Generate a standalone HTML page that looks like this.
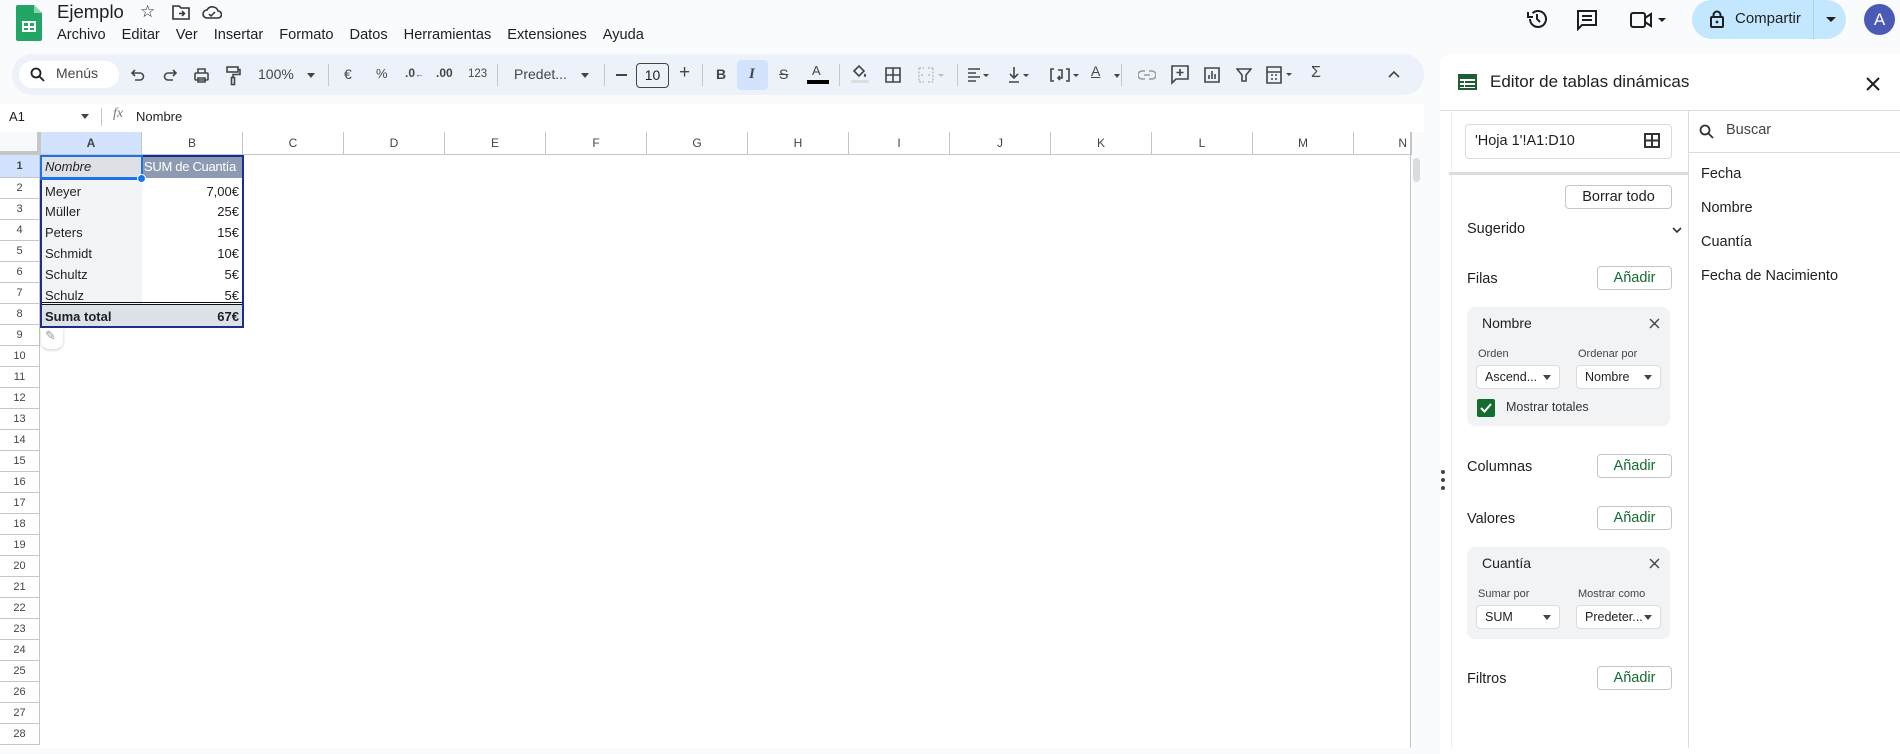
<!DOCTYPE html>
<html><head><meta charset="utf-8"><style>
*{margin:0;padding:0;box-sizing:border-box}
body{width:1900px;height:748px;overflow:hidden;background:#f9fbfd;font-family:"Liberation Sans",sans-serif;color:#1f1f1f;position:relative}
.a{position:absolute;white-space:nowrap}
.menu span{margin-right:16px}
.tb{position:absolute;top:66px;font-size:14px;color:#444746}
.ic{position:absolute}
.sep{position:absolute;top:64px;width:1px;height:22px;background:#c7c7c7}
.ch{position:absolute;top:132px;height:23px;font-size:12px;color:#444;text-align:center;line-height:23px;border-right:1px solid #c4c7c5;width:101px;background:#fff}
.rh{position:absolute;left:0;width:40px;font-size:11px;color:#444;text-align:center;border-bottom:1px solid #c4c7c5;height:21px;line-height:21px;background:#fff;border-right:1px solid #c4c7c5}
.cell{position:absolute;font-size:13px;height:21px;line-height:21px;padding:0 4px;width:101px;overflow:hidden;white-space:nowrap}
.btn{position:absolute;border:1px solid #c4c7c5;border-radius:4px;background:#fff;color:#146c2e;font-size:14.5px;text-align:center;font-weight:500}
.lbl{position:absolute;font-size:14.5px;color:#1f1f1f}
.sel{position:absolute;height:24px;background:#fff;border:1px solid #dadce0;border-radius:4px;font-size:12.5px;line-height:22px;padding-left:8px;color:#1f1f1f}
.sel:after{content:"";position:absolute;right:8px;top:9px;border:4px solid transparent;border-top:5px solid #444;}
.card{position:absolute;left:1467px;width:203px;background:#f1f3f4;border-radius:8px}
.small{position:absolute;font-size:11px;color:#444}
</style></head><body>

<svg class="ic" style="left:16px;top:5px" width="26" height="36" viewBox="0 0 26 36"><path d="M2 0h16l8 8v26a2 2 0 0 1-2 2H2a2 2 0 0 1-2-2V2a2 2 0 0 1 2-2z" fill="#23a566"/><path d="M18 0v8h8z" fill="#8ed1b1"/><rect x="6" y="16" width="14" height="11" fill="#fff"/><path d="M8 18h4v3H8zM14 18h4v3h-4zM8 23h4v2H8zM14 23h4v2h-4z" fill="#23a566"/></svg>
<div class="a" style="left:57px;top:1px;font-size:18.5px">Ejemplo</div>
<div class="a" style="left:140px;top:2px;font-size:17px">☆</div>
<svg class="ic" style="left:172px;top:5px" width="18" height="15" viewBox="0 0 18 15"><path d="M1 1h6l2 2h8v11H1z" fill="none" stroke="#333" stroke-width="1.6"/><path d="M7 8.5h5M10 6l2.5 2.5L10 11" fill="none" stroke="#333" stroke-width="1.5"/></svg>
<svg class="ic" style="left:202px;top:4px" width="20" height="16" viewBox="0 0 20 16"><path d="M5 14a4 4 0 0 1 0-8 6 6 0 0 1 11 1 3.5 3.5 0 0 1 0 7z" fill="none" stroke="#333" stroke-width="1.6"/><path d="M7 10l2 2 4-4" fill="none" stroke="#333" stroke-width="1.5"/></svg>
<div class="a menu" style="left:57px;top:27px;font-size:14.6px"><span>Archivo</span><span>Editar</span><span>Ver</span><span>Insertar</span><span>Formato</span><span>Datos</span><span>Herramientas</span><span>Extensiones</span><span>Ayuda</span></div>

<svg class="ic" style="left:1526px;top:8px" width="22" height="22" viewBox="0 0 22 22"><path d="M4 11a8 8 0 1 0 2.5-5.8" fill="none" stroke="#1f1f1f" stroke-width="2"/><path d="M2 4v5h5" fill="none" stroke="#1f1f1f" stroke-width="2"/><path d="M11 6v5l3 3" fill="none" stroke="#1f1f1f" stroke-width="2"/></svg>
<svg class="ic" style="left:1576px;top:9px" width="22" height="22" viewBox="0 0 22 22"><path d="M2 2h18v14H6l-4 4z" fill="none" stroke="#1f1f1f" stroke-width="2"/><path d="M6 7h10M6 11h10" stroke="#1f1f1f" stroke-width="2"/></svg>
<svg class="ic" style="left:1630px;top:11px" width="40" height="18" viewBox="0 0 40 18"><rect x="1" y="2" width="14" height="14" rx="2" fill="none" stroke="#1f1f1f" stroke-width="2"/><path d="M15 7l6-4v12l-6-4" fill="none" stroke="#1f1f1f" stroke-width="2"/><path d="M28 7h8l-4 4z" fill="#1f1f1f"/></svg>
<div class="a" style="left:1692px;top:0;width:154px;height:39px;background:#c2e7ff;border-radius:20px"></div>
<div class="a" style="left:1813px;top:0;width:1px;height:39px;background:#a8d4f0"></div>
<svg class="ic" style="left:1710px;top:10px" width="14" height="18" viewBox="0 0 14 18"><rect x="1" y="7" width="12" height="10" rx="1" fill="none" stroke="#1f1f1f" stroke-width="2"/><path d="M3.5 7V5a3.5 3.5 0 0 1 7 0v2" fill="none" stroke="#1f1f1f" stroke-width="2"/><circle cx="7" cy="12" r="1.4" fill="#1f1f1f"/></svg>
<div class="a" style="left:1735px;top:10px;font-size:15px;font-weight:500">Compartir</div>
<div class="a" style="left:1826px;top:17px;border:5px solid transparent;border-top:5px solid #1f1f1f"></div>
<div class="a" style="left:1864px;top:4px;width:31px;height:31px;border-radius:50%;background:#4b5bb5;color:#fff;font-size:17px;text-align:center;line-height:31px">A</div>

<div class="a" style="left:12px;top:54px;width:1412px;height:41px;background:#edf2fa;border-radius:20px"></div>
<div class="a" style="left:19px;top:61px;width:100px;height:27px;background:#fff;border-radius:14px"></div>
<svg class="ic" style="left:30px;top:67px" width="15" height="15" viewBox="0 0 15 15"><circle cx="6" cy="6" r="4.5" fill="none" stroke="#1f1f1f" stroke-width="1.8"/><path d="M9.5 9.5l4.5 4.5" stroke="#1f1f1f" stroke-width="1.8"/></svg>
<div class="tb" style="left:56px;top:65px">Menús</div>
<svg class="ic" style="left:130px;top:68px" width="96" height="16" viewBox="0 0 96 16"><g fill="none" stroke="#444746" stroke-width="1.6"><path d="M3 5h7a3.5 3.5 0 0 1 0 7H5M5 2L2 5l3 3"/><path d="M45 5h-7a3.5 3.5 0 0 0 0 7h5M43 2l3 3-3 3"/><rect x="65" y="5" width="13" height="7" rx="1"/><path d="M68 5V1h7v4M68 10h7v4h-7z"/></g></svg>
<svg class="ic" style="left:225px;top:66px" width="16" height="20" viewBox="0 0 16 20"><g fill="none" stroke="#444746" stroke-width="1.6"><rect x="2" y="1" width="11" height="5"/><path d="M13 3.5h2v5H8v3"/><rect x="6.5" y="11.5" width="3" height="7"/></g></svg>
<div class="tb" style="left:258px">100%</div>
<div class="a" style="left:307px;top:73px;border:4px solid transparent;border-top:5px solid #444"></div>
<div class="sep" style="left:328px"></div>
<div class="tb" style="left:344px">€</div>
<div class="tb" style="left:376px;font-size:13px">%</div>
<div class="tb" style="left:405px;font-size:12px;font-weight:bold">.0<span style="font-size:9px">←</span></div>
<div class="tb" style="left:436px;font-size:12px;font-weight:bold">.00</div>
<div class="tb" style="left:468px;font-size:11.5px;top:68px">123</div>
<div class="sep" style="left:497px"></div>
<div class="tb" style="left:514px">Predet...</div>
<div class="a" style="left:581px;top:73px;border:4px solid transparent;border-top:5px solid #444"></div>
<div class="sep" style="left:604px"></div>
<div class="a" style="left:616px;top:74px;width:11px;height:2px;background:#444"></div>
<div class="a" style="left:636px;top:63px;width:33px;height:25px;border:1px solid #444;border-radius:4px;font-size:14px;text-align:center;line-height:23px">10</div>
<div class="tb" style="left:679px;top:62px;font-size:19px">+</div>
<div class="sep" style="left:702px"></div>
<div class="tb" style="left:716px;font-weight:bold;font-size:14px">B</div>
<div class="a" style="left:737px;top:60px;width:31px;height:30px;background:#d3e3fd;border-radius:4px"></div>
<div class="tb" style="left:749px;font-style:italic;font-weight:bold;font-family:'Liberation Serif',serif;font-size:15px">I</div>
<div class="tb" style="left:779px;text-decoration:line-through">S</div>
<div class="tb" style="left:812px;font-size:13px;top:63px">A</div>
<div class="a" style="left:807px;top:80px;width:22px;height:4px;background:#000"></div>
<div class="sep" style="left:839px"></div>
<svg class="ic" style="left:850px;top:63px" width="20" height="20" viewBox="0 0 20 20"><path d="M4 8l5-5 5 5-5 5z" fill="none" stroke="#444" stroke-width="1.6"/><path d="M15 10c1 2 2 3 0 4-2-1-1-2 0-4z" fill="#444"/><rect x="1" y="17" width="18" height="3" fill="#ddd"/></svg>
<svg class="ic" style="left:885px;top:67px" width="16" height="16" viewBox="0 0 16 16"><path d="M1 1h14v14H1zM8 1v14M1 8h14" fill="none" stroke="#444" stroke-width="1.6"/></svg>
<svg class="ic" style="left:918px;top:67px" width="28" height="16" viewBox="0 0 28 16"><path d="M1 1h5M1 15h5M10 1h5M10 15h5M1 1v14M15 1v14M3 8h3M10 8h3" fill="none" stroke="#bbb" stroke-width="1.4" stroke-dasharray="2 1.5"/><path d="M20 7h6l-3 3z" fill="#bbb"/></svg>
<div class="sep" style="left:957px"></div>
<svg class="ic" style="left:966px;top:66px" width="130" height="18" viewBox="0 0 130 18"><g fill="none" stroke="#444" stroke-width="1.6"><path d="M2 3h12M2 7h8M2 11h12M2 15h8"/><path d="M48 1v11M44 8l4 4 4-4M43 16h10"/><path d="M88 3h-3v12h3M92 4h4v8h-4M94 10l-2 2 2 2M100 3h3v12h-3"/></g><path d="M17 8h6l-3 3z M57 8h6l-3 3z M107 8h6l-3 3z" fill="#444"/></svg>
<div class="tb" style="left:1091px;top:63px;text-decoration:underline;font-size:14px">A</div>
<div class="a" style="left:1114px;top:74px;border:3px solid transparent;border-top:4px solid #444"></div>
<div class="sep" style="left:1121px"></div>
<svg class="ic" style="left:1138px;top:69px" width="18" height="12" viewBox="0 0 18 12"><path d="M7 2H4a4 4 0 0 0 0 8h3M11 2h3a4 4 0 0 1 0 8h-3M6 6h6" fill="none" stroke="#999" stroke-width="1.5"/></svg>
<svg class="ic" style="left:1171px;top:65px" width="18" height="20" viewBox="0 0 18 20"><path d="M1 1h16v13H5l-4 4zM9 4v7M5.5 7.5h7" fill="none" stroke="#444" stroke-width="1.6"/></svg>
<svg class="ic" style="left:1204px;top:67px" width="16" height="16" viewBox="0 0 16 16"><path d="M1 1h14v14H1zM5 12V8M8 12V4M11 12V7" fill="none" stroke="#444" stroke-width="1.6"/></svg>
<svg class="ic" style="left:1236px;top:67px" width="16" height="16" viewBox="0 0 16 16"><path d="M1 2h14l-5 6v6H6V8z" fill="none" stroke="#444" stroke-width="1.6"/></svg>
<svg class="ic" style="left:1266px;top:66px" width="30" height="18" viewBox="0 0 30 18"><path d="M1 1h14v16H1zM1 6h14M5 9h2M9 9h2M5 13h2M9 13h2" fill="none" stroke="#444" stroke-width="1.6"/><path d="M20 7h6l-3 3z" fill="#444"/></svg>
<div class="tb" style="left:1311px;top:64px;font-size:16px">Σ</div>
<svg class="ic" style="left:1388px;top:70px" width="12" height="8" viewBox="0 0 12 8"><path d="M1 7l5-5 5 5" fill="none" stroke="#444" stroke-width="1.6"/></svg>

<div class="a" style="left:0;top:104px;width:1424px;height:28px;background:#fff"></div>
<div class="a" style="left:9px;top:109px;font-size:13px">A1</div>
<div class="a" style="left:81px;top:114px;border:4px solid transparent;border-top:5px solid #444"></div>
<div class="a" style="left:101px;top:108px;width:1px;height:18px;background:#c7c7c7"></div>
<div class="a" style="left:113px;top:106px;font-size:14px;font-style:italic;font-family:'Liberation Serif',serif;color:#777">fx</div>
<div class="a" style="left:136px;top:109px;font-size:13px">Nombre</div>

<div class="a" style="left:0;top:132px;width:1412px;height:616px;background:#fff"></div>
<div class="a" style="left:0;top:132px;width:41px;height:23px;background:#f8f9fa;border-right:4px solid #c4c7c5;border-bottom:4px solid #c4c7c5"></div>
<div class="ch" style="left:41px;background:#d3e3fd;font-weight:bold">A</div>
<div class="ch" style="left:142px">B</div><div class="ch" style="left:243px">C</div><div class="ch" style="left:344px">D</div><div class="ch" style="left:445px">E</div><div class="ch" style="left:546px">F</div><div class="ch" style="left:647px">G</div><div class="ch" style="left:748px">H</div><div class="ch" style="left:849px">I</div><div class="ch" style="left:950px">J</div><div class="ch" style="left:1051px">K</div><div class="ch" style="left:1152px">L</div><div class="ch" style="left:1253px">M</div><div class="ch" style="left:1354px;width:58px;text-align:right;padding-right:4px">N</div>
<div class="a" style="left:0;top:154px;width:1412px;height:1px;background:#c4c7c5"></div>
<div class="rh" style="top:155px;height:23px;line-height:23px;background:#d3e3fd;font-weight:bold">1</div>
<div class="rh" style="top:178px">2</div><div class="rh" style="top:199px">3</div><div class="rh" style="top:220px">4</div><div class="rh" style="top:241px">5</div><div class="rh" style="top:262px">6</div><div class="rh" style="top:283px">7</div><div class="rh" style="top:304px">8</div><div class="rh" style="top:325px">9</div><div class="rh" style="top:346px">10</div><div class="rh" style="top:367px">11</div><div class="rh" style="top:388px">12</div><div class="rh" style="top:409px">13</div><div class="rh" style="top:430px">14</div><div class="rh" style="top:451px">15</div><div class="rh" style="top:472px">16</div><div class="rh" style="top:493px">17</div><div class="rh" style="top:514px">18</div><div class="rh" style="top:535px">19</div><div class="rh" style="top:556px">20</div><div class="rh" style="top:577px">21</div><div class="rh" style="top:598px">22</div><div class="rh" style="top:619px">23</div><div class="rh" style="top:640px">24</div><div class="rh" style="top:661px">25</div><div class="rh" style="top:682px">26</div><div class="rh" style="top:703px">27</div><div class="rh" style="top:724px">28</div>

<div class="a" style="left:41px;top:155px;width:101px;height:23px;background:#dde1e6"></div>
<div class="a" style="left:142px;top:155px;width:101px;height:23px;background:#8d9ab2"></div>
<div class="a" style="left:41px;top:178px;width:101px;height:126px;background:#f3f4f6"></div>
<div class="a" style="left:41px;top:305px;width:202px;height:22px;background:#dde1e8"></div>
<div class="a" style="left:41px;top:302px;width:202px;height:3px;border-top:1px solid #111;border-bottom:1px solid #111"></div>
<div class="cell" style="left:41px;top:156px;font-style:italic">Nombre</div>
<div class="cell" style="left:142px;top:156px;color:#fff;padding:0 2px;letter-spacing:-0.3px">SUM de Cuantía</div>
<div class="cell" style="left:41px;top:181px">Meyer</div><div class="cell" style="left:142px;top:181px;text-align:right">7,00€</div>
<div class="cell" style="left:41px;top:201px">Müller</div><div class="cell" style="left:142px;top:201px;text-align:right">25€</div>
<div class="cell" style="left:41px;top:222px">Peters</div><div class="cell" style="left:142px;top:222px;text-align:right">15€</div>
<div class="cell" style="left:41px;top:243px">Schmidt</div><div class="cell" style="left:142px;top:243px;text-align:right">10€</div>
<div class="cell" style="left:41px;top:264px">Schultz</div><div class="cell" style="left:142px;top:264px;text-align:right">5€</div>
<div class="cell" style="left:41px;top:285px">Schulz</div><div class="cell" style="left:142px;top:285px;text-align:right">5€</div>
<div class="cell" style="left:41px;top:306px;font-weight:bold">Suma total</div><div class="cell" style="left:142px;top:306px;text-align:right;font-weight:bold">67€</div>
<div class="a" style="left:40px;top:155px;width:204px;height:173px;border:2px solid #1a2f8f"></div>
<div class="a" style="left:40px;top:155px;width:103px;height:25px;border:2px solid #1a73e8;border-bottom-width:3px"></div>
<div class="a" style="left:137px;top:174px;width:9px;height:9px;border-radius:50%;background:#1a73e8;border:1px solid #fff"></div>
<div class="a" style="left:41px;top:328px;width:22px;height:21px;background:#fff;border-radius:0 0 8px 8px;box-shadow:0 1px 3px rgba(0,0,0,.2)"></div>
<div class="a" style="left:45px;top:328px;font-size:13px;color:#999">✎</div>
<div class="a" style="left:1410px;top:132px;width:1px;height:616px;background:#c4c7c5"></div>
<div class="a" style="left:1413px;top:158px;width:7px;height:24px;border-radius:4px;background:#dadce0"></div>

<div class="a" style="left:1440px;top:54px;width:460px;height:700px;background:#fff;border-radius:12px 0 0 0"></div>
<svg class="ic" style="left:1458px;top:74px" width="19" height="16" viewBox="0 0 19 16"><path d="M0 0h19v16H0z" fill="#1e5e35"/><path d="M2 5h15v2H2zM2 9h15v2H2zM2 13h15v1H2zM6 5h1v9H6z" fill="#fff"/></svg>
<div class="a" style="left:1490px;top:72px;font-size:17px;color:#1f1f1f">Editor de tablas dinámicas</div>
<svg class="ic" style="left:1866px;top:77px" width="14" height="14" viewBox="0 0 14 14"><path d="M1 1l12 12M13 1L1 13" stroke="#1f1f1f" stroke-width="2"/></svg>
<div class="a" style="left:1440px;top:110px;width:460px;height:1px;background:#dadce0"></div>
<div class="a" style="left:1688px;top:111px;width:1px;height:637px;background:#dadce0"></div>
<div class="a" style="left:1451px;top:110px;width:1px;height:638px;background:#eee"></div>
<div class="a" style="left:1465px;top:124px;width:207px;height:35px;border:1px solid #dadce0;border-radius:4px"></div>
<div class="a" style="left:1475px;top:133px;font-size:14.5px">'Hoja 1'!A1:D10</div>
<svg class="ic" style="left:1644px;top:133px" width="16" height="15" viewBox="0 0 16 15"><path d="M1 1h14v13H1zM8 1v13M1 7.5h14" fill="none" stroke="#333" stroke-width="2"/></svg>
<div class="a" style="left:1449px;top:172px;width:239px;height:3px;background:#dadce0"></div>
<div class="btn" style="left:1565px;top:185px;width:107px;height:24px;line-height:22px;color:#1f1f1f">Borrar todo</div>
<div class="lbl" style="left:1467px;top:221px">Sugerido</div>
<svg class="ic" style="left:1672px;top:227px" width="10" height="7" viewBox="0 0 10 7"><path d="M1 1l4 4 4-4" fill="none" stroke="#333" stroke-width="1.6"/></svg>
<div class="lbl" style="left:1467px;top:271px">Filas</div>
<div class="btn" style="left:1597px;top:266px;width:75px;height:24px;line-height:22px">Añadir</div>
<div class="card" style="top:307px;height:119px"></div>
<div class="a" style="left:1482px;top:315px;font-size:14px;font-weight:500">Nombre</div>
<svg class="ic" style="left:1649px;top:318px" width="11" height="11" viewBox="0 0 11 11"><path d="M1 1l9 9M10 1L1 10" stroke="#444" stroke-width="1.4"/></svg>
<div class="small" style="left:1478px;top:348px">Orden</div>
<div class="small" style="left:1578px;top:348px">Ordenar por</div>
<div class="sel" style="left:1476px;top:365px;width:84px">Ascend...</div>
<div class="sel" style="left:1576px;top:365px;width:85px">Nombre</div>
<div class="a" style="left:1477px;top:399px;width:18px;height:18px;background:#146c2e;border-radius:2px"></div>
<svg class="ic" style="left:1479px;top:401px" width="14" height="14" viewBox="0 0 14 14"><path d="M2 7l3.5 3.5L12 3" fill="none" stroke="#fff" stroke-width="2"/></svg>
<div class="a" style="left:1506px;top:400px;font-size:12.5px;color:#333">Mostrar totales</div>
<div class="a" style="left:1441px;top:470px;width:4px;height:4px;border-radius:50%;background:#444;box-shadow:0 8px 0 #444,0 16px 0 #444"></div>
<div class="lbl" style="left:1467px;top:459px">Columnas</div>
<div class="btn" style="left:1597px;top:454px;width:75px;height:24px;line-height:22px">Añadir</div>
<div class="lbl" style="left:1467px;top:511px">Valores</div>
<div class="btn" style="left:1597px;top:506px;width:75px;height:24px;line-height:22px">Añadir</div>
<div class="card" style="top:547px;height:92px"></div>
<div class="a" style="left:1482px;top:555px;font-size:14px;font-weight:500">Cuantía</div>
<svg class="ic" style="left:1649px;top:558px" width="11" height="11" viewBox="0 0 11 11"><path d="M1 1l9 9M10 1L1 10" stroke="#444" stroke-width="1.4"/></svg>
<div class="small" style="left:1478px;top:588px">Sumar por</div>
<div class="small" style="left:1578px;top:588px">Mostrar como</div>
<div class="sel" style="left:1476px;top:605px;width:84px">SUM</div>
<div class="sel" style="left:1576px;top:605px;width:85px">Predeter...</div>
<div class="lbl" style="left:1467px;top:671px">Filtros</div>
<div class="btn" style="left:1597px;top:666px;width:75px;height:24px;line-height:22px">Añadir</div>
<svg class="ic" style="left:1699px;top:124px" width="15" height="15" viewBox="0 0 15 15"><circle cx="6" cy="6" r="4.5" fill="none" stroke="#333" stroke-width="1.8"/><path d="M9.5 9.5l4.5 4.5" stroke="#333" stroke-width="1.8"/></svg>
<div class="a" style="left:1726px;top:122px;font-size:14.5px;color:#444">Buscar</div>
<div class="a" style="left:1689px;top:152px;width:211px;height:1px;background:#dadce0"></div>
<div class="lbl" style="left:1701px;top:166px">Fecha</div>
<div class="lbl" style="left:1701px;top:200px">Nombre</div>
<div class="lbl" style="left:1701px;top:234px">Cuantía</div>
<div class="lbl" style="left:1701px;top:268px">Fecha de Nacimiento</div>
</body></html>
